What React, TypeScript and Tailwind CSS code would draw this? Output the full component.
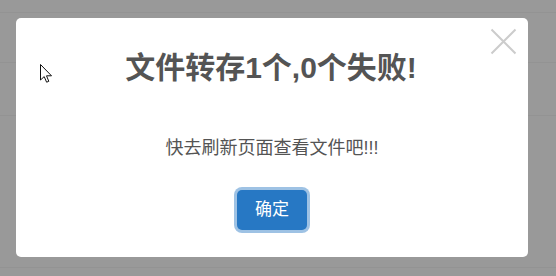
import React from "react";

const rows = [12, 50, 52, 152, 1];

export default function App() {
  return (
    <div className="relative w-[556px] h-[276px] overflow-hidden bg-[#999999]">
      {/* faint page rows under the overlay */}
      <div className="flex flex-col">
        <div className="h-[12px]" />
        <div className="h-[50px] border-t border-[#939393]" />
        <div className="h-[53px] border-t border-[#939393]" />
        <div className="h-[152px] border-t border-[#939393]" />
        <div className="h-[9px] border-t border-[#939393]" />
      </div>

      {/* modal overlay */}
      <div className="absolute inset-0 flex items-start pl-[16px] pt-[18px]">
        <div
          className="relative w-[512px] h-[239px] bg-white rounded-[5px] flex flex-col items-center pt-[32px]"
          style={{ fontFamily: '"Liberation Sans", "Noto Sans CJK SC", sans-serif' }}
        >
          <button className="absolute right-[11px] top-[10px] w-[27px] h-[27px] flex items-center justify-center">
            <svg width="27" height="27" viewBox="0 0 27 27">
              <path d="M1.5 1.5 L25.5 25.5 M25.5 1.5 L1.5 25.5" stroke="#cccccc" strokeWidth="2" fill="none" />
            </svg>
          </button>
          <h2 className="text-[30px] leading-[36px] font-semibold text-[#545454] pr-[2px]">
            文件转存1个,0个失败!
          </h2>
          <p className="mt-[50px] text-[18px] leading-[24px] text-[#545454]">
            快去刷新页面查看文件吧!!!
          </p>
          <button className="mt-[30px] h-[40px] px-[18px] rounded-[5px] bg-[#2778c4] text-white text-[17px] leading-[20px] shadow-[0_0_0_3px_rgba(39,120,196,0.45)]">
            确定
          </button>
        </div>
      </div>

      {/* mouse cursor */}
      <svg className="absolute left-[40px] top-[64px]" width="13" height="20" viewBox="0 0 13 20">
        <path
          d="M0.5 0.5 L0.5 16 L4.2 12.6 L6.6 18.2 L8.8 17.3 L6.5 11.8 L11.5 11.8 Z"
          fill="#ffffff"
          stroke="#111111"
          strokeWidth="1"
          strokeLinejoin="round"
        />
      </svg>
    </div>
  );
}
